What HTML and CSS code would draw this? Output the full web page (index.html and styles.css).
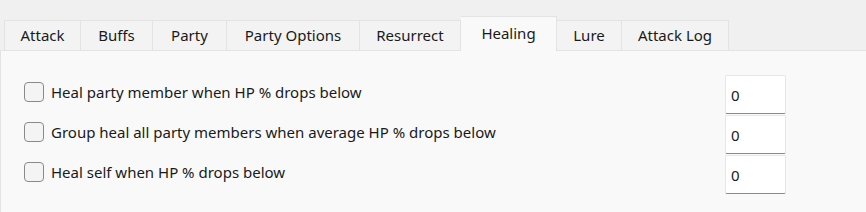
FILE: index.html
```html
<!DOCTYPE html>
<html lang="en">
<head>
    <link rel="stylesheet" href="styles.css">
</head>
<body>
    <div class="tabs">
        <div class="tab" style="width:77px">Attack</div>
        <div class="tab" style="width:72px">Buffs</div>
        <div class="tab" style="width:74px">Party</div>
        <div class="tab" style="width:133px">Party Options</div>
        <div class="tab" style="width:101px">Resurrect</div>
        <div class="tab active" style="width:96px">Healing</div>
        <div class="tab" style="width:65px">Lure</div>
        <div class="tab" style="width:107px">Attack Log</div>
    </div>
    <div class="panel">
        <div class="row">
            <label class="opt"><span class="box"></span>Heal party member when HP % drops below</label>
            <input class="num" type="text" value="0">
        </div>
        <div class="row">
            <label class="opt"><span class="box"></span>Group heal all party members when average HP % drops below</label>
            <input class="num" type="text" value="0">
        </div>
        <div class="row">
            <label class="opt"><span class="box"></span>Heal self when HP % drops below</label>
            <input class="num" type="text" value="0">
        </div>
    </div>
</body>
</html>
```

FILE: styles.css
```css
body {
    margin: 0;
    background: #f0f0f0;
    font-family: "Segoe UI", "Noto Sans", "Open Sans", sans-serif;
    font-size: 15px;
    color: #1a1a1a;
    height: 212px;
    overflow: hidden;
}

.tabs {
    display: flex;
    align-items: flex-end;
    height: 50px;
    padding-left: 4px;
}

.tab {
    box-sizing: border-box;
    height: 30px;
    border: 1px solid #e3e3e3;
    border-bottom: 0;
    border-left: 0;
    background: #f3f3f3;
    text-align: center;
    line-height: 28px;
}

.tab:first-child {
    border-left: 1px solid #e3e3e3;
}

.tab.active {
    height: 35px;
    margin-bottom: -1px;
    background: #f9f9f9;
    line-height: 33px;
    position: relative;
}

.panel {
    background: #f9f9f9;
    border-top: 1px solid #e3e3e3;
    border-left: 1px solid #e3e3e3;
    height: 162px;
    padding-top: 24px;
    box-sizing: border-box;
}

.row {
    display: flex;
    align-items: center;
    height: 40px;
    padding-left: 23px;
    padding-right: 80px;
}

.opt {
    flex: 1;
    display: flex;
    align-items: center;
    margin-bottom: 7px;
}

.box {
    box-sizing: border-box;
    width: 20px;
    height: 20px;
    border: 1px solid #8a8a8a;
    border-radius: 4px;
    background: #f4f4f4;
    margin-right: 7px;
}

.num {
    box-sizing: border-box;
    width: 61px;
    height: 39px;
    margin: 0 0 1px;
    border: 1px solid #e6e6e6;
    border-bottom: 1px solid #8a8a8a;
    border-radius: 2px;
    background: #fff;
    font: inherit;
    color: #1a1a1a;
    padding: 0 0 0 5px;
}
```
